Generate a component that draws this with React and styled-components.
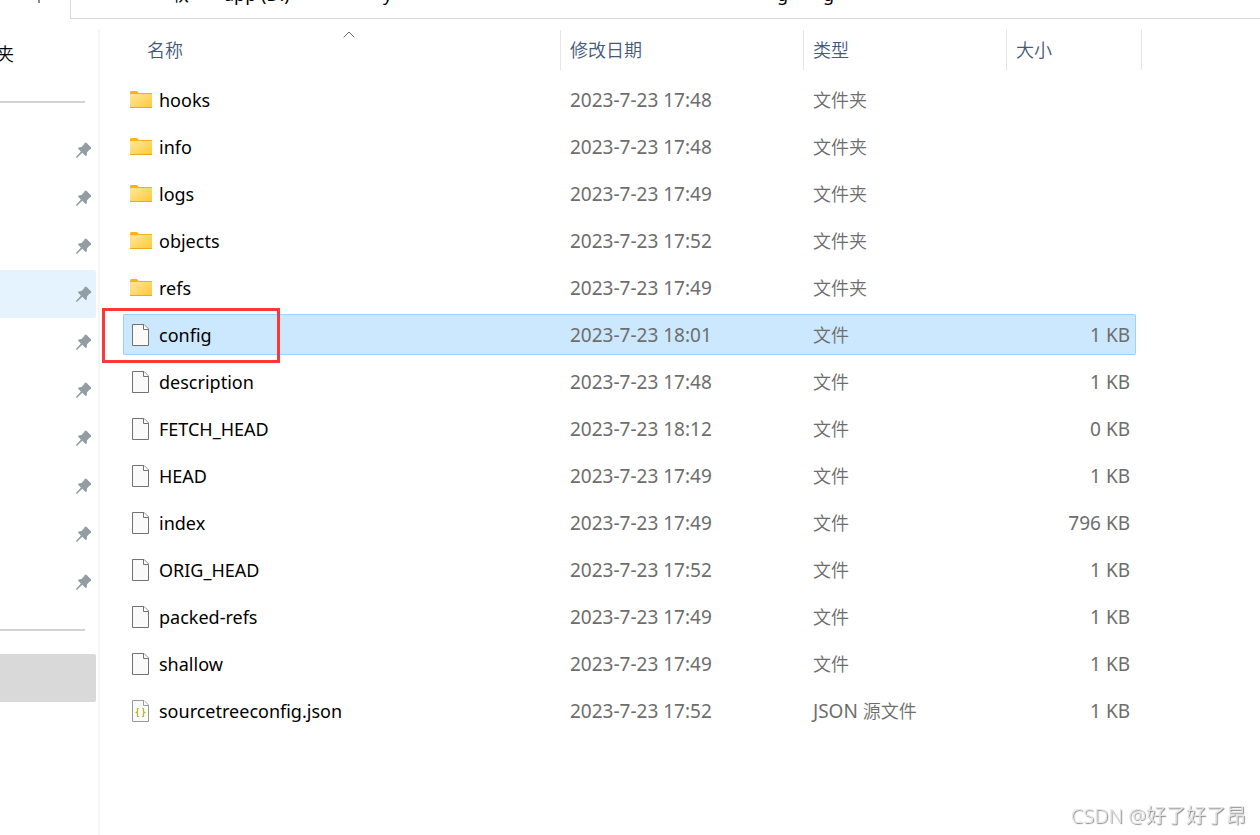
import React, { useState } from 'react';

import styled, { createGlobalStyle } from 'styled-components';

const GlobalStyle = createGlobalStyle`
  * {
    box-sizing: border-box;
  }
  body {
    margin: 0;
    background: #fff;
    color: #000;
    font: 18px/24px "Noto Sans", "Noto Sans CJK SC", sans-serif;
  }
  button {
    border: 0;
    padding: 0;
    background: none;
    color: inherit;
    font: inherit;
    cursor: pointer;
  }
`;

const Explorer = styled.div`
  min-height: 100vh;
  display: flex;
  flex-direction: column;
  overflow: hidden;
`;

const TopBar = styled.div`
  display: flex;
  height: 19px;
  flex: none;
`;

const NavEdge = styled.div`
  width: 70px;
  padding-left: 38px;
`;

const NavStem = styled.div`
  width: 2px;
  height: 3px;
  background: #8a8a8a;
`;

const AddressBar = styled.div`
  flex: 1;
  display: flex;
  align-items: flex-end;
  padding: 0 0 12px 100px;
  border-left: 1px solid #d9d9d9;
  border-bottom: 1px solid #d9d9d9;
  overflow: hidden;
`;

const Crumb = styled.span`
  flex: none;
  width: ${p => p.$width}px;
  white-space: nowrap;
`;

const Body = styled.div`
  flex: 1;
  display: flex;
  padding-top: 11px;
`;

const Sidebar = styled.nav`
  flex: none;
  width: 100px;
  border-right: 2px solid #f5f5f5;
  padding-right: 2px;
`;

const SideRow = styled.div`
  display: flex;
  align-items: center;
  justify-content: ${p => (p.$pinned ? 'flex-end' : 'flex-start')};
  height: 48px;
  padding-right: 4px;
  border-radius: 0 2px 2px 0;
  background: ${p => p.$bg || 'transparent'};
  font-weight: 350;
  overflow: hidden;
`;

const CutLabel = styled.span`
  margin-left: -4px;
`;

const PinButton = styled.button`
  display: flex;
`;

const SideDivider = styled.hr`
  height: 2px;
  margin: 23px 11px 23px 0;
  border: 0;
  background: #d3d3d3;
`;

const Main = styled.main`
  flex: 1;
  min-width: 0;
  padding: 0 118px 24px 23px;
`;

const FileTable = styled.table`
  width: 100%;
  margin-top: -6px;
  table-layout: fixed;
  border-collapse: separate;
  border-spacing: 0 6px;
`;

const Col = styled.col`
  width: ${p => (p.$width ? `${p.$width}px` : 'auto')};
`;

const HeadCell = styled.th`
  height: 43px;
  padding: 0 0 0 ${p => (p.$first ? 15 : 0)}px;
  vertical-align: top;
  text-align: left;
  font-weight: 350;
  color: #44597a;
`;

const HeadButton = styled.button`
  position: relative;
  display: block;
  width: 100%;
  height: 40px;
  padding-left: 9px;
  border-right: 1px solid #e5e5e5;
  text-align: left;
`;

const SortMark = styled.svg`
  position: absolute;
  top: 1px;
  left: 50%;
  margin-left: -6px;
`;

const Row = styled.tr`
  td {
    background: ${p => (p.$selected ? '#cce8ff' : 'transparent')};
    border: 1px solid ${p => (p.$selected ? '#99d1ff' : 'transparent')};
    border-width: 1px 0;
  }
  td:first-child {
    border-left-width: 1px;
    border-radius: 2px 0 0 2px;
  }
  td:nth-child(4) {
    border-right-width: 1px;
    border-radius: 0 2px 2px 0;
  }
`;

const Cell = styled.td`
  position: relative;
  height: 41px;
  padding: 0 5px 0 9px;
  color: #6d6d6d;
  font-weight: 350;
  text-align: ${p => (p.$right ? 'right' : 'left')};
  white-space: nowrap;
`;

const Latin = styled.span`
  font-size: 19px;
  font-weight: 400;
`;

const NameCell = styled(Cell)`
  padding-left: 6px;
  color: #000;
  font-weight: 400;
`;

const FileName = styled.div`
  display: flex;
  align-items: center;
  gap: 7px;
`;

const IconSlot = styled.span`
  display: flex;
  justify-content: center;
  width: 22px;
`;

const Highlight = styled.div`
  position: absolute;
  top: -7px;
  left: -22px;
  z-index: 1;
  width: 178px;
  height: 55px;
  border: 3px solid #fb3838;
  pointer-events: none;
`;

const Watermark = styled.div`
  position: fixed;
  right: 14px;
  bottom: 7px;
  color: #e4e4e4;
  font-size: 20px;
  font-weight: 350;
  text-shadow: 1px 1px 1px #8a8a8a;
`;

const FolderIcon = () => (
  <svg width="22" height="18" viewBox="0 0 22 18">
    <defs>
      <linearGradient id="folder" x1="0" y1="0" x2="1" y2="1">
        <stop offset="0" stopColor="#ffe8a0" />
        <stop offset="1" stopColor="#ffc937" />
      </linearGradient>
    </defs>
    <path d="M0 1.5Q0 0 1 0H7L8.3 1.5V3.5H0Z" fill="#fbb416" />
    <path d="M0 3.5H7L8.5 2H22V17H0Z" fill="url(#folder)" />
    <path d="M8 2.5H22" stroke="#efb027" />
    <path d="M0 16.5H22" stroke="#eda91c" />
  </svg>
);

const FileIcon = ({ json }) => (
  <svg width="18" height="22" viewBox="0 0 18 22">
    <path d="M.5 .5H12L16.5 5V21.5H.5Z" fill="#fafafa" stroke={json ? '#999' : '#727272'} />
    <path d="M11.5 .5V5.5H16.5" fill="#fff" stroke={json ? '#999' : '#727272'} />
    {json && (
      <path
        d="M6.8 8.5H5.5V11.8L4.3 12.5L5.5 13.2V16.5H6.8M10.2 8.5H11.5V11.8L12.7 12.5L11.5 13.2V16.5H10.2"
        fill="none"
        stroke="#b5b52c"
        strokeWidth="1.2"
      />
    )}
  </svg>
);

const PinIcon = () => (
  <svg width="16" height="16" viewBox="0 0 16 16" fill="#929da4">
    <path d="M8.8 .7H10.4L15.2 5.5V6.8L13.4 7.8L11 10.5L10.8 13.5L9.6 14.1L6.3 10.8L1.2 15.8L0 16L.2 14.7L4.9 9.6L1.9 6.5L2.5 5.4L5.5 5L8 2.6Z" />
  </svg>
);

const FILES = [
  { name: 'hooks', date: '2023-7-23 17:48', kind: 'folder' },
  { name: 'info', date: '2023-7-23 17:48', kind: 'folder' },
  { name: 'logs', date: '2023-7-23 17:49', kind: 'folder' },
  { name: 'objects', date: '2023-7-23 17:52', kind: 'folder' },
  { name: 'refs', date: '2023-7-23 17:49', kind: 'folder' },
  { name: 'config', date: '2023-7-23 18:01', kind: 'file', size: '1 KB', marked: true },
  { name: 'description', date: '2023-7-23 17:48', kind: 'file', size: '1 KB' },
  { name: 'FETCH_HEAD', date: '2023-7-23 18:12', kind: 'file', size: '0 KB' },
  { name: 'HEAD', date: '2023-7-23 17:49', kind: 'file', size: '1 KB' },
  { name: 'index', date: '2023-7-23 17:49', kind: 'file', size: '796 KB' },
  { name: 'ORIG_HEAD', date: '2023-7-23 17:52', kind: 'file', size: '1 KB' },
  { name: 'packed-refs', date: '2023-7-23 17:49', kind: 'file', size: '1 KB' },
  { name: 'shallow', date: '2023-7-23 17:49', kind: 'file', size: '1 KB' },
  { name: 'sourcetreeconfig.json', date: '2023-7-23 17:52', kind: 'json', size: '1 KB' },
];

const TYPES = {
  folder: '文件夹',
  file: '文件',
  json: <><Latin>JSON </Latin>源文件</>,
};

const PINNED = 10;
const CURRENT_PIN = 3;

const App = () => {
  const [selected, setSelected] = useState('config');

  return (
    <>
      <GlobalStyle />
      <Explorer>
        <TopBar>
          <NavEdge><NavStem /></NavEdge>
          <AddressBar>
            <Crumb $width={53}>软</Crumb>
            <Crumb $width={159}>app (D:)</Crumb>
            <Crumb $width={394}>y</Crumb>
            <Crumb $width={46}>g</Crumb>
            <Crumb $width={46}>g</Crumb>
          </AddressBar>
        </TopBar>
        <Body>
          <Sidebar>
            <SideRow><CutLabel>夹</CutLabel></SideRow>
            <SideDivider />
            {Array.from({ length: PINNED }, (_, i) => (
              <SideRow key={i} $pinned $bg={i === CURRENT_PIN && '#e5f3ff'}>
                <PinButton aria-label="取消固定"><PinIcon /></PinButton>
              </SideRow>
            ))}
            <SideDivider />
            <SideRow $bg="#d9d9d9" />
          </Sidebar>
          <Main>
            <FileTable>
              <colgroup>
                <Col />
                <Col $width={243} />
                <Col $width={203} />
                <Col $width={129} />
                <Col $width={6} />
              </colgroup>
              <thead>
                <tr>
                  <HeadCell $first>
                    <HeadButton>
                      名称
                      <SortMark width="12" height="7" viewBox="0 0 12 7">
                        <path d="M.7 6.3L6 1L11.3 6.3" fill="none" stroke="#666" />
                      </SortMark>
                    </HeadButton>
                  </HeadCell>
                  <HeadCell><HeadButton>修改日期</HeadButton></HeadCell>
                  <HeadCell><HeadButton>类型</HeadButton></HeadCell>
                  <HeadCell colSpan={2}><HeadButton>大小</HeadButton></HeadCell>
                </tr>
              </thead>
              <tbody>
                {FILES.map(file => (
                  <Row
                    key={file.name}
                    $selected={file.name === selected}
                    onClick={() => setSelected(file.name)}
                  >
                    <NameCell>
                      <FileName>
                        <IconSlot>
                          {file.kind === 'folder' ? <FolderIcon /> : <FileIcon json={file.kind === 'json'} />}
                        </IconSlot>
                        {file.name}
                      </FileName>
                      {file.marked && <Highlight />}
                    </NameCell>
                    <Cell><Latin as="time">{file.date}</Latin></Cell>
                    <Cell>{TYPES[file.kind]}</Cell>
                    <Cell $right><Latin>{file.size}</Latin></Cell>
                  </Row>
                ))}
              </tbody>
            </FileTable>
          </Main>
        </Body>
      </Explorer>
      <Watermark>CSDN @好了好了昂</Watermark>
    </>
  );
};

export default App;
